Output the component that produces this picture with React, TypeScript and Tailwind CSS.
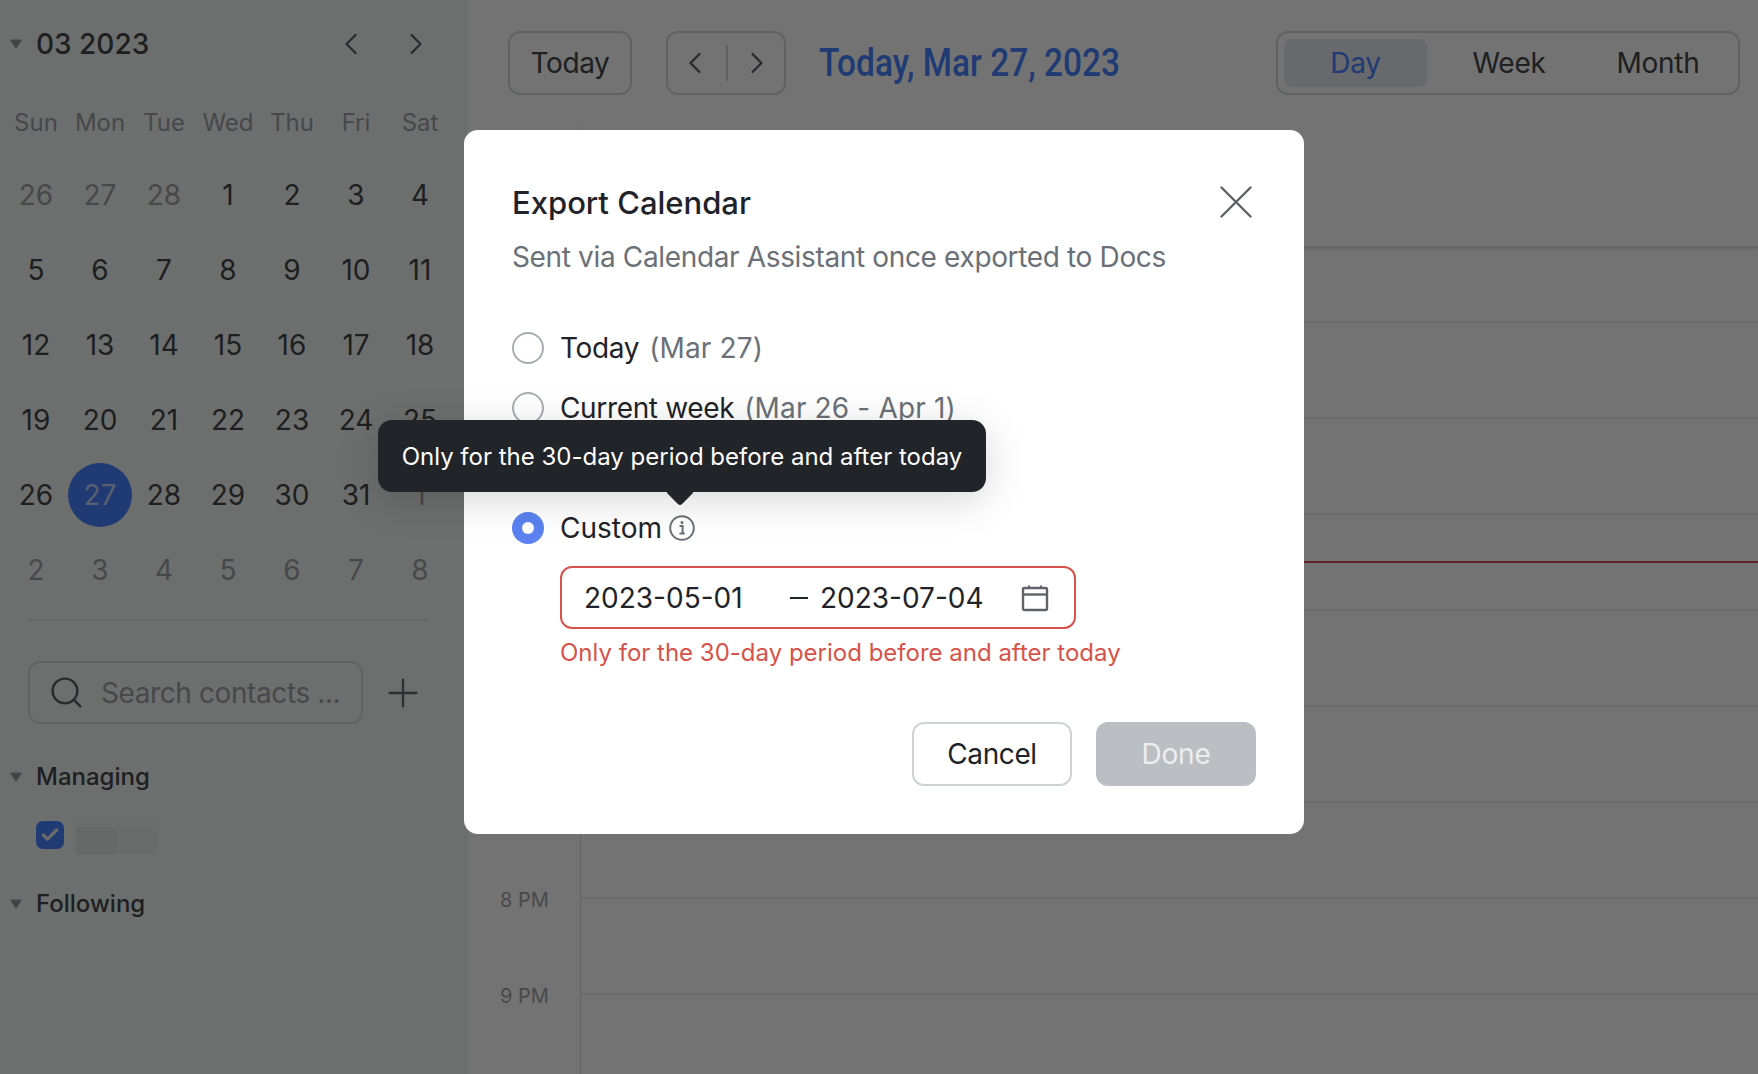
import { ChevronLeft, ChevronRight, Search, Plus, Check } from 'lucide-react';

const weekdays = ['Sun', 'Mon', 'Tue', 'Wed', 'Thu', 'Fri', 'Sat'];

const days = [
  [26, 27, 28, 1, 2, 3, 4],
  [5, 6, 7, 8, 9, 10, 11],
  [12, 13, 14, 15, 16, 17, 18],
  [19, 20, 21, 22, 23, 24, 25],
  [26, 27, 28, 29, 30, 31, 1],
  [2, 3, 4, 5, 6, 7, 8],
];

const hours = ['3 PM', '4 PM', '5 PM', '6 PM', '7 PM', '8 PM', '9 PM'];

function Caret() {
  return (
    <svg width="12" height="10" viewBox="0 0 12 10" className="shrink-0">
      <path d="M1 0.5h10a.8.8 0 0 1 .6 1.3L6.6 9a.8.8 0 0 1-1.2 0L.4 1.8A.8.8 0 0 1 1 .5z" fill="#94979d" />
    </svg>
  );
}

function MiniCalendar() {
  return (
    <>
      <div className="flex h-[88px] items-center">
        <div className="ml-[10px]">
          <Caret />
        </div>
        <span className="ml-[14px] text-[28px] font-medium text-[#43464a]">03 2023</span>
        <div className="ml-auto mr-[34px] flex gap-[29px] text-[#5a5d62]">
          <ChevronLeft className="h-[36px] w-[36px]" strokeWidth={1.5} />
          <ChevronRight className="h-[36px] w-[36px]" strokeWidth={1.5} />
        </div>
      </div>
      <div className="ml-[4px] grid h-[69px] w-[448px] grid-cols-7 items-center text-center text-[24px] text-[#9ba0a6]">
        {weekdays.map((d) => (
          <span key={d}>{d}</span>
        ))}
      </div>
      <div className="ml-[4px] w-[448px]">
        {days.map((row, i) => (
          <div key={i} className="grid h-[75px] grid-cols-7 items-center text-center text-[28px]">
            {row.map((d, j) => {
              const muted = (i === 0 && d > 20) || (i === 4 && d === 1) || i === 5;
              const today = i === 4 && d === 27;
              return (
                <div key={j} className="flex justify-center">
                  <span
                    className={`flex h-[64px] w-[64px] items-center justify-center rounded-full ${
                      today ? 'bg-[#4781ff] text-[#c4d4f5]' : muted ? 'text-[#9ba0a6]' : 'text-[#43464a]'
                    }`}
                  >
                    {d}
                  </span>
                </div>
              );
            })}
          </div>
        ))}
      </div>
    </>
  );
}

function Sidebar() {
  return (
    <aside className="h-full w-[468px] shrink-0 bg-[#f2f7f5]">
      <MiniCalendar />
      <div className="ml-[28px] mt-[12px] h-[2px] w-[400px] bg-[#e3e6e6]" />
      <div className="mt-[40px] flex items-center">
        <div className="ml-[28px] flex h-[63px] w-[335px] items-center rounded-[12px] border-2 border-[#d5d8dc] pl-[18px]">
          <Search className="h-[37px] w-[37px] text-[#5a5d62]" strokeWidth={1.6} />
          <span className="ml-[16px] whitespace-nowrap text-[28px] tracking-[-0.4px] text-[#9ba0a6]">
            Search contacts ...
          </span>
        </div>
        <Plus className="ml-[17px] h-[46px] w-[46px] text-[#63666b]" strokeWidth={1.2} />
      </div>
      <div className="mt-[37px] flex h-[32px] items-center">
        <div className="ml-[10px]">
          <Caret />
        </div>
        <span className="ml-[14px] text-[24px] font-medium text-[#43464a]">Managing</span>
      </div>
      <div className="mt-[22px] flex h-[39px] items-center">
        <span className="ml-[36px] flex h-[28px] w-[28px] items-center justify-center rounded-[7px] bg-[#4781ff]">
          <Check className="h-[20px] w-[20px] text-[#f0f0f0]" strokeWidth={4} />
        </span>
        {/* name is blurred out in the picture */}
        <div className="ml-[12px] flex h-[39px] w-[82px] flex-col bg-[#f0f4f3]">
          <div className="h-[12px]" />
          <div className="flex flex-1">
            <div className="w-[42px] bg-[#e4e8e8]" />
            <div className="flex-1 bg-[#ebefee]" />
          </div>
        </div>
      </div>
      <div className="mt-[34px] flex h-[32px] items-center">
        <div className="ml-[10px]">
          <Caret />
        </div>
        <span className="ml-[14px] text-[24px] font-medium text-[#43464a]">Following</span>
      </div>
    </aside>
  );
}

function Toolbar() {
  return (
    <div className="flex h-[127px] items-start pt-[31px]">
      <button className="ml-[40px] h-[64px] w-[124px] rounded-[12px] border-2 border-[#d5d8dc] text-[28px] tracking-[-0.4px] text-[#43464a]">
        Today
      </button>
      <div className="ml-[34px] flex h-[64px] w-[120px] items-center rounded-[12px] border-2 border-[#d5d8dc] text-[#5a5d62]">
        <ChevronLeft className="ml-[9px] h-[36px] w-[36px]" strokeWidth={1.5} />
        <div className="ml-[13px] h-[36px] w-[2px] bg-[#d5d8dc]" />
        <ChevronRight className="ml-[11px] h-[36px] w-[36px]" strokeWidth={1.5} />
      </div>
      <h1 className="ml-[33px] flex h-[64px] origin-left scale-x-[0.88] items-center whitespace-nowrap font-['Roboto',sans-serif] text-[38px] font-medium text-[#4781ff]">
        Today, Mar 27, 2023
      </h1>
      <div className="ml-auto mr-[18px] flex h-[64px] w-[464px] items-center rounded-[12px] border-2 border-[#d5d8dc] pl-[6px] text-[28px] tracking-[-0.3px] text-[#43464a]">
        <span className="flex h-[48px] w-[143px] items-center justify-center rounded-[8px] bg-[#e5e8f0] text-[#4781ff]">
          Day
        </span>
        <span className="ml-[39px] w-[86px] text-center">Week</span>
        <span className="ml-[56px] w-[100px] text-center">Month</span>
      </div>
    </div>
  );
}

function DayGrid() {
  return (
    <div className="flex-1 overflow-hidden">
      <div className="relative h-[121px] border-b-2 border-[#e3e3e3] shadow-[0_1px_4px_rgba(0,0,0,0.12)]">
        <div className="ml-[112px] h-full border-l border-[#dedede]" />
      </div>
      <div className="h-[75px] border-b border-[#dedede]">
        <div className="ml-[112px] h-full border-l border-[#dedede]" />
      </div>
      {hours.map((h, i) => (
        <div key={h} className="flex h-[96px]">
          <div className="relative w-[112px] shrink-0">
            <span className="absolute bottom-[-16px] left-[32px] text-[20px] text-[#a3a3a3]">{h}</span>
          </div>
          <div className="relative flex-1 border-b border-l border-[#dedede]">
            {i === 2 && <div className="absolute left-0 right-0 top-[46px] h-[2px] bg-[#d94a4a]" />}
          </div>
        </div>
      ))}
      <div className="ml-[112px] h-[80px] border-l border-[#dedede]" />
    </div>
  );
}

function RadioRow({ label, hint }: { label: string; hint: string }) {
  return (
    <div className="flex h-[60px] items-center">
      <span className="h-[32px] w-[32px] rounded-full border-2 border-[#a9adb3]" />
      <span className="ml-[16px] text-[28px] tracking-[-0.35px] text-[#1f2329]">{label}</span>
      <span className="ml-[10px] text-[28px] tracking-[0.15px] text-[#6b7078]">{hint}</span>
    </div>
  );
}

function ExportModal() {
  return (
    <div className="relative h-[704px] w-[840px] rounded-[14px] bg-white pl-[48px] pr-[48px]">
      <div className="flex h-[144px] items-start justify-between pt-[51px]">
        <div>
          <h2 className="text-[31px] font-medium leading-[44px] text-[#1f2329]">Export Calendar</h2>
          <p className="mt-[12px] whitespace-nowrap text-[28px] leading-[40px] tracking-[-0.35px] text-[#6b7078]">
            Sent via Calendar Assistant once exported to Docs
          </p>
        </div>
        <svg width="32" height="32" viewBox="0 0 32 32" fill="none" className="mr-[4px] mt-[5px]">
          <path d="M1.5 1.5l29 29M30.5 1.5l-29 29" stroke="#5f6368" strokeWidth="2.4" strokeLinecap="round" />
        </svg>
      </div>
      <div className="mt-[44px]">
        <RadioRow label="Today" hint="(Mar 27)" />
        <RadioRow label="Current week" hint="(Mar 26 - Apr 1)" />
        <RadioRow label="Current month" hint="(Mar)" />
        <div className="flex h-[60px] items-center">
          <span className="flex h-[32px] w-[32px] items-center justify-center rounded-full bg-[#5b82f0]">
            <span className="h-[12px] w-[12px] rounded-full bg-white" />
          </span>
          <span className="ml-[16px] text-[28px] text-[#1f2329]">Custom</span>
          <svg width="26" height="26" viewBox="0 0 26 26" fill="none" className="ml-[7px]">
            <circle cx="13" cy="13" r="11.8" stroke="#6b7078" strokeWidth="2" />
            <circle cx="13" cy="7.6" r="1.5" fill="#6b7078" />
            <path d="M10.6 11h3v7.4M10.4 18.6h5.4" stroke="#6b7078" strokeWidth="2" />
          </svg>
        </div>
      </div>
      <div className="ml-[48px] mt-[8px] flex h-[63px] w-[516px] items-center rounded-[12px] border-2 border-[#d6524a] pl-[22px] text-[28px] text-[#1f2329]">
        <span className="w-[159px] whitespace-nowrap">2023-05-01</span>
        <span className="ml-[47px] h-[2px] w-[18px] bg-[#1f2329]" />
        <span className="ml-[12px] w-[160px] whitespace-nowrap">2023-07-04</span>
        <svg width="28" height="28" viewBox="0 0 28 28" fill="none" className="ml-[41px]">
          <rect x="2" y="4" width="24" height="22" rx="1.5" stroke="#5f6368" strokeWidth="2.4" />
          <path d="M2 10.5h24" stroke="#5f6368" strokeWidth="2.4" />
          <path d="M8 1.5v3M20 1.5v3" stroke="#5f6368" strokeWidth="2" />
        </svg>
      </div>
      <p className="ml-[48px] mt-[8px] whitespace-nowrap text-[24px] leading-[32px] text-[#d6524a]">
        Only for the 30-day period before and after today
      </p>
      <div className="mt-[53px] flex justify-end gap-[24px]">
        <button className="h-[64px] w-[160px] rounded-[12px] border-2 border-[#d0d3d6] bg-white text-[28px] tracking-[-0.4px] text-[#1f2329]">
          Cancel
        </button>
        <button className="h-[64px] w-[160px] rounded-[12px] bg-[#bbbec3] text-[28px] tracking-[-0.2px] text-[#eceef0]">
          Done
        </button>
      </div>

      {/* tooltip over the Custom info icon */}
      <div className="absolute left-[-86px] top-[290px] flex h-[72px] w-[608px] items-center justify-center rounded-[14px] bg-[#212429] pt-[2px] text-[24px] text-white shadow-[0_8px_40px_rgba(0,0,0,0.16)]">
        Only for the 30-day period before and after today
        <span className="absolute bottom-[-10px] left-[292px] h-[20px] w-[20px] rotate-45 rounded-[3px] bg-[#212429]" />
      </div>
    </div>
  );
}

export default function App() {
  return (
    <div className="relative flex h-[1074px] w-[1758px] overflow-hidden bg-white font-['Inter',sans-serif]">
      <Sidebar />
      <main className="flex min-w-0 flex-1 flex-col">
        <Toolbar />
        <DayGrid />
      </main>
      <div className="absolute inset-0 bg-black/55 pl-[464px] pt-[130px]">
        <ExportModal />
      </div>
    </div>
  );
}
